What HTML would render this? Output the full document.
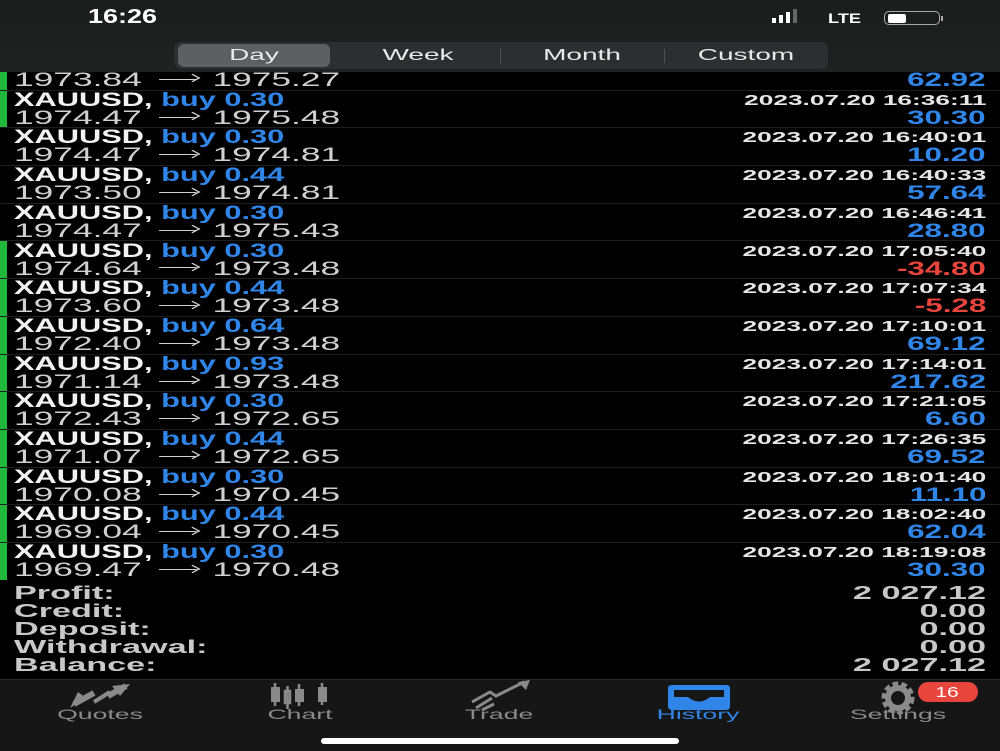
<!DOCTYPE html><html><head><meta charset="utf-8"><style>
body{margin:0;width:1000px;height:750px;background:#000;overflow:hidden;position:relative;font-family:"Liberation Sans",sans-serif;}
.abs{position:absolute;white-space:nowrap}
.row{position:absolute;left:0;width:1000px;height:37.7px;border-bottom:1px solid #1e1e1e;box-sizing:border-box}
.sym{position:absolute;left:14px;top:-1px;font-weight:bold;font-size:19px;color:#f2f2f2;transform:scaleX(1.62);transform-origin:left;white-space:nowrap}
.sym b{color:#2f86e8}
.pr{position:absolute;left:14px;top:17px;font-size:19px;color:#d0d0d0;transform:scaleX(1.86);transform-origin:left;white-space:nowrap}
.ar{display:inline-block;position:relative;width:20px;height:0;border-top:1.5px solid #d0d0d0;vertical-align:middle;margin:0 9px 3px 9px}
.ar:after{content:"";position:absolute;right:-1px;top:-4.5px;width:5px;height:5px;border-top:1.5px solid #d0d0d0;border-right:1.5px solid #d0d0d0;transform:rotate(45deg)}
.dt{position:absolute;right:14px;top:1px;font-weight:bold;font-size:15px;color:#e6e6e6;transform:scaleX(1.75);transform-origin:right;white-space:nowrap}
.pf{position:absolute;right:14px;top:17px;font-weight:bold;font-size:19px;color:#2f86e8;transform:scaleX(1.65);transform-origin:right;white-space:nowrap}
.pf.n{color:#e8453c}
.sl{position:absolute;left:14px;font-weight:bold;font-size:18px;color:#c8c8c8;transform:scaleX(1.9);transform-origin:left}
.sv{position:absolute;right:14px;font-weight:bold;font-size:18px;color:#c8c8c8;transform:scaleX(1.9);transform-origin:right}
.tab{position:absolute;top:706px;font-size:14px;color:#8a8a8a;transform:scaleX(1.9);text-align:center;width:100px}
.seg{position:absolute;top:47px;width:152px;text-align:center;font-size:16px;color:#e8e8e8;transform:scaleX(1.75)}
</style></head><body>
<div class="abs" style="left:0;top:72px;width:7px;height:56px;background:#1fb83a"></div>
<div class="abs" style="left:0;top:240px;width:7px;height:340px;background:#1fb83a"></div>
<div class="row" style="top:53px"><div class="pr">1973.84<span class="ar"></span>1975.27</div><div class="pf">62.92</div></div>
<div class="row" style="top:90.7px"><div class="sym">XAUUSD, <b>buy 0.30</b></div><div class="dt">2023.07.20 16:36:11</div><div class="pr">1974.47<span class="ar"></span>1975.48</div><div class="pf">30.30</div></div>
<div class="row" style="top:128.4px"><div class="sym">XAUUSD, <b>buy 0.30</b></div><div class="dt">2023.07.20 16:40:01</div><div class="pr">1974.47<span class="ar"></span>1974.81</div><div class="pf">10.20</div></div>
<div class="row" style="top:166.1px"><div class="sym">XAUUSD, <b>buy 0.44</b></div><div class="dt">2023.07.20 16:40:33</div><div class="pr">1973.50<span class="ar"></span>1974.81</div><div class="pf">57.64</div></div>
<div class="row" style="top:203.8px"><div class="sym">XAUUSD, <b>buy 0.30</b></div><div class="dt">2023.07.20 16:46:41</div><div class="pr">1974.47<span class="ar"></span>1975.43</div><div class="pf">28.80</div></div>
<div class="row" style="top:241.5px"><div class="sym">XAUUSD, <b>buy 0.30</b></div><div class="dt">2023.07.20 17:05:40</div><div class="pr">1974.64<span class="ar"></span>1973.48</div><div class="pf n">-34.80</div></div>
<div class="row" style="top:279.2px"><div class="sym">XAUUSD, <b>buy 0.44</b></div><div class="dt">2023.07.20 17:07:34</div><div class="pr">1973.60<span class="ar"></span>1973.48</div><div class="pf n">-5.28</div></div>
<div class="row" style="top:316.9px"><div class="sym">XAUUSD, <b>buy 0.64</b></div><div class="dt">2023.07.20 17:10:01</div><div class="pr">1972.40<span class="ar"></span>1973.48</div><div class="pf">69.12</div></div>
<div class="row" style="top:354.6px"><div class="sym">XAUUSD, <b>buy 0.93</b></div><div class="dt">2023.07.20 17:14:01</div><div class="pr">1971.14<span class="ar"></span>1973.48</div><div class="pf">217.62</div></div>
<div class="row" style="top:392.3px"><div class="sym">XAUUSD, <b>buy 0.30</b></div><div class="dt">2023.07.20 17:21:05</div><div class="pr">1972.43<span class="ar"></span>1972.65</div><div class="pf">6.60</div></div>
<div class="row" style="top:430px"><div class="sym">XAUUSD, <b>buy 0.44</b></div><div class="dt">2023.07.20 17:26:35</div><div class="pr">1971.07<span class="ar"></span>1972.65</div><div class="pf">69.52</div></div>
<div class="row" style="top:467.7px"><div class="sym">XAUUSD, <b>buy 0.30</b></div><div class="dt">2023.07.20 18:01:40</div><div class="pr">1970.08<span class="ar"></span>1970.45</div><div class="pf">11.10</div></div>
<div class="row" style="top:505.4px"><div class="sym">XAUUSD, <b>buy 0.44</b></div><div class="dt">2023.07.20 18:02:40</div><div class="pr">1969.04<span class="ar"></span>1970.45</div><div class="pf">62.04</div></div>
<div class="row" style="top:543.1px;border:none"><div class="sym">XAUUSD, <b>buy 0.30</b></div><div class="dt">2023.07.20 18:19:08</div><div class="pr">1969.47<span class="ar"></span>1970.48</div><div class="pf">30.30</div></div>

<div class="abs" style="left:0;top:0;width:1000px;height:72px;background:linear-gradient(#1a1d1c,#202222)"></div>
<div class="abs" style="left:88px;top:6px;font-size:20px;font-weight:bold;color:#fff;transform:scaleX(1.35);transform-origin:left">16:26</div>
<div class="abs" style="left:772px;top:18px;width:4px;height:5px;background:#fff"></div>
<div class="abs" style="left:779px;top:15px;width:4px;height:8px;background:#fff"></div>
<div class="abs" style="left:786px;top:12px;width:4px;height:11px;background:#fff"></div>
<div class="abs" style="left:793px;top:9px;width:4px;height:14px;background:#666"></div>
<div class="abs" style="left:828px;top:10px;font-size:14px;font-weight:bold;color:#fff;transform:scaleX(1.3);transform-origin:left">LTE</div>
<div class="abs" style="left:884px;top:11px;width:54px;height:12px;border:1.5px solid #aaa;border-radius:5px"></div>
<div class="abs" style="left:888px;top:14px;width:18px;height:9px;background:#fff;border-radius:2px"></div>
<div class="abs" style="left:941px;top:16px;width:2px;height:5px;background:#aaa"></div>
<div class="abs" style="left:174px;top:42px;width:654px;height:27px;background:#2c2e2f;border-radius:7px"></div>
<div class="abs" style="left:178px;top:44px;width:152px;height:23px;background:#5d6062;border-radius:6px"></div>
<div class="abs" style="left:500px;top:49px;width:1px;height:14px;background:#555"></div>
<div class="abs" style="left:664px;top:49px;width:1px;height:14px;background:#555"></div>
<div class="seg" style="left:178px">Day</div>
<div class="seg" style="left:342px">Week</div>
<div class="seg" style="left:506px">Month</div>
<div class="seg" style="left:670px">Custom</div>

<div class="sl" style="top:583px">Profit:</div><div class="sv" style="top:583px">2 027.12</div>
<div class="sl" style="top:601px">Credit:</div><div class="sv" style="top:601px">0.00</div>
<div class="sl" style="top:619px">Deposit:</div><div class="sv" style="top:619px">0.00</div>
<div class="sl" style="top:637px">Withdrawal:</div><div class="sv" style="top:637px">0.00</div>
<div class="sl" style="top:655px">Balance:</div><div class="sv" style="top:655px">2 027.12</div>

<div class="abs" style="left:0;top:679px;width:1000px;height:71px;background:#161616;border-top:1px solid #2a2a2a"></div>
<svg class="abs" style="left:0;top:680px" width="1000" height="40">
<g fill="#8a8a8a" stroke="#8a8a8a">
<path d="M74 24 L94 13 M108 16 L126 6" stroke-width="6" fill="none"/>
<path d="M70 28 L86 18 L78 12 Z M130 4 L112 6 L120 16 Z" stroke="none"/>
<path d="M94 22 L110 12" stroke-width="4"/>
<rect x="271" y="7" width="9" height="15" stroke="none"/><rect x="295" y="9" width="9" height="13" stroke="none"/><rect x="318" y="7" width="9" height="15" stroke="none"/>
<rect x="285" y="11" width="5" height="12" fill="none" stroke-width="2.5"/>
<path d="M275 3V26 M299 4V26 M322 3V25 M287.5 6V29" stroke-width="2.5"/>
<path d="M472 22 L490 12 L496 16 L524 2 M476 28 L492 18 M482 30 L494 24" stroke-width="3" fill="none"/>
<path d="M530 0 L518 2 L526 10Z" stroke="none"/>
</g>
<path d="M668 8 Q668 5 672 5 H726 Q730 5 730 8 V26 Q730 30 726 30 H672 Q668 30 668 26Z" fill="#2f86e8"/>
<path d="M674 10 H724 V17 H710 Q699 26 688 17 H674Z" fill="#161616"/>
<circle cx="898" cy="18" r="13" fill="none" stroke="#8a8a8a" stroke-width="7" stroke-dasharray="5 3"/>
<circle cx="898" cy="18" r="10" fill="none" stroke="#8a8a8a" stroke-width="6"/>
<rect x="918" y="2" width="60" height="20" rx="10" fill="#e8453c"/>
<text x="947" y="17" text-anchor="middle" font-family="Liberation Sans" font-size="15" fill="#fff" transform="translate(947 0) scale(1.4 1) translate(-947 0)">16</text>
</svg>
<div class="tab" style="left:50px">Quotes</div>
<div class="tab" style="left:250px">Chart</div>
<div class="tab" style="left:449px">Trade</div>
<div class="tab" style="left:648px;color:#2f86e8">History</div>
<div class="tab" style="left:848px">Settings</div>
<div class="abs" style="left:321px;top:738px;width:358px;height:6px;background:#fff;border-radius:3px"></div>
</body></html>
